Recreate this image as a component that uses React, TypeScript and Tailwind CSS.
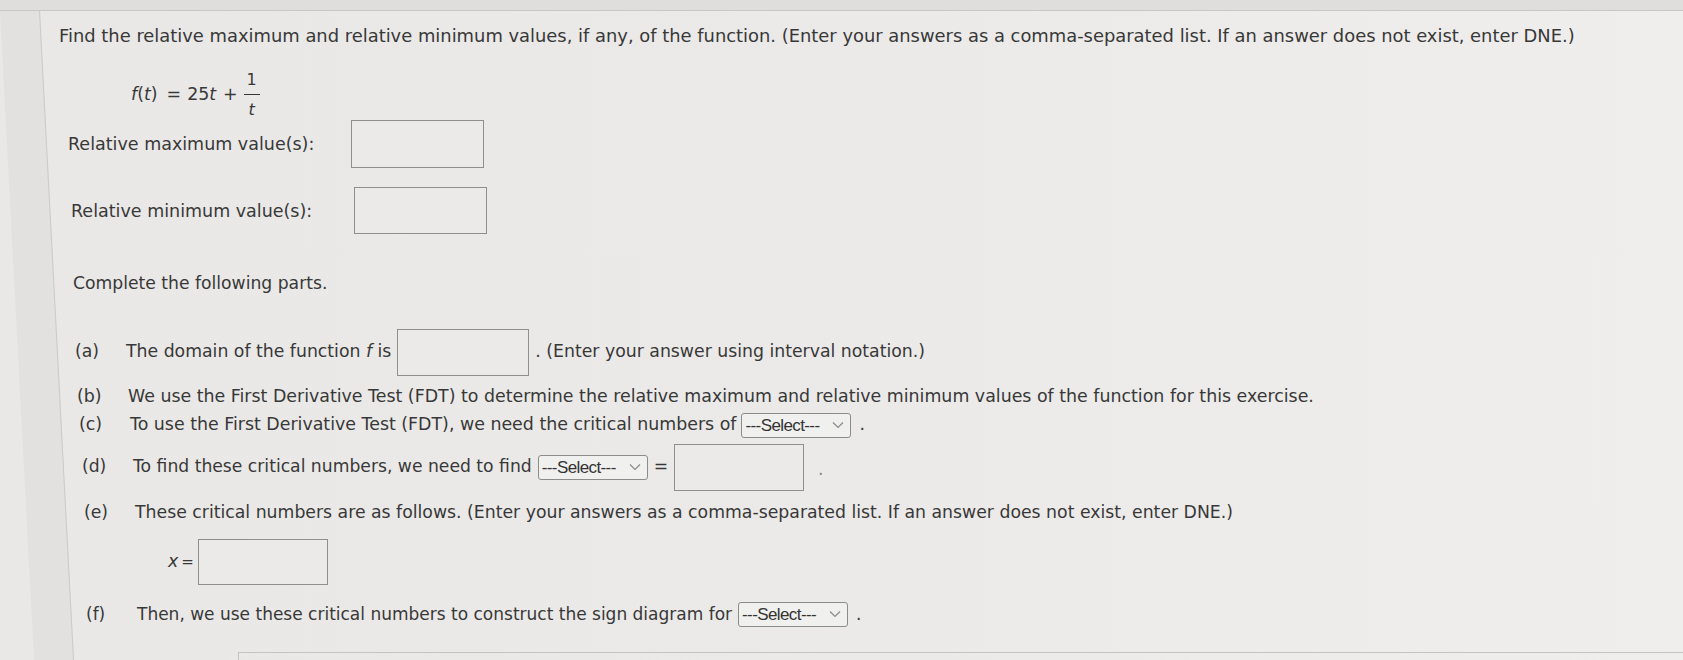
import React from 'react';

const box = 'border border-[#8f8f8d] bg-[#ebeae8] shrink-0';

const Select: React.FC = () => (
  <span className="w-[110px] h-[25px] shrink-0 inline-flex items-center justify-between border border-[#8c8c8a] rounded-[3px] bg-[#f0f0ee] pl-[3px] pr-[6px] font-['Liberation_Sans',sans-serif] text-[17px] text-[#333]">
    <span className="tracking-[-0.6px]">---Select---</span>
    <svg width="12" height="8" viewBox="0 0 12 8" className="shrink-0">
      <path d="M1 1.5 L6 6.5 L11 1.5" fill="none" stroke="#8a8a8a" strokeWidth="1.2" />
    </svg>
  </span>
);

const Part: React.FC<{ tag: string; pl: string; h?: string; mt: string; size?: string; children: React.ReactNode }> = ({
  tag,
  pl,
  h = 'h-[22px]',
  mt,
  size = 'text-[17.4px]',
  children,
}) => (
  <div className={`flex items-center ${h} ${mt} ${pl} ${size}`}>
    <span className="w-[51px] shrink-0">{tag}</span>
    <div className="flex items-center whitespace-nowrap">{children}</div>
  </div>
);

export default function App() {
  return (
    <div className="w-[1683px] h-[660px] overflow-hidden bg-[#e9e8e6] text-[#383838] font-['DejaVu_Sans',sans-serif] text-[17.4px] leading-none">
      {/* top strip */}
      <div className="h-[11px] bg-[#dfdedc] border-b border-[#c8c7c5]" />

      <div className="flex h-[649px]">
        {/* left margin */}
        <div className="w-[40px] shrink-0 bg-[#e2e1df] border-r border-[#cbcac8] origin-top skew-x-3" />

        <div className="flex-1 flex flex-col bg-gradient-to-r from-[#e9e8e6] via-[#ebeae8] to-[#efeeec]">
          <div className="h-[22px] mt-[14px] pl-[19px] flex items-center whitespace-nowrap text-[17.9px]">
            Find the relative maximum and relative minimum values, if any, of the function. (Enter your answers as a
            comma-separated list. If an answer does not exist, enter DNE.)
          </div>

          {/* f(t) */}
          <div className="h-[44px] mt-[26px] pl-[91px] flex items-center whitespace-nowrap">
            <span>
              <span className="italic">f</span>(<span className="italic">t</span>)
            </span>
            <span className="ml-[9px]">=</span>
            <span className="ml-[6px]">
              25<span className="italic">t</span>
            </span>
            <span className="ml-[7px]">+</span>
            <span className="inline-flex flex-col items-center ml-[6px] text-[16px]">
              <span className="pb-[6px]">1</span>
              <span className="w-[16px] h-px bg-[#383838]" />
              <span className="italic pt-[7px]">t</span>
            </span>
          </div>

          <div className="h-[48px] mt-[3px] pl-[28px] flex items-center text-[17.5px]">
            <span className="w-[283px] shrink-0 pt-[2px]">Relative maximum value(s):</span>
            <span className={`${box} w-[133px] h-[48px]`} />
          </div>

          <div className="h-[48px] mt-[18px] pl-[31px] flex items-center text-[17.5px]">
            <span className="w-[283px] shrink-0 pt-[3px]">Relative minimum value(s):</span>
            <span className={`${box} w-[133px] h-[47px]`} />
          </div>

          <div className="h-[22px] mt-[39px] pl-[33px] flex items-center text-[17.2px]">
            Complete the following parts.
          </div>

          <Part tag="(a)" pl="pl-[35px]" h="h-[48px]" mt="mt-[33px]" size="text-[17.3px]">
            <span>
              The domain of the function <span className="italic">f</span> is
            </span>
            <span className={`${box} w-[132px] h-[47px] ml-[6px]`} />
            <span className="ml-[6px]">. (Enter your answer using interval notation.)</span>
          </Part>

          <Part tag="(b)" pl="pl-[37px]" mt="mt-[10px]">
            We use the First Derivative Test (FDT) to determine the relative maximum and relative minimum values of the
            function for this exercise.
          </Part>

          <Part tag="(c)" pl="pl-[39px]" mt="mt-[6px]">
            <span>To use the First Derivative Test (FDT), we need the critical numbers of</span>
            <span className="ml-[5px] flex">
              <Select />
            </span>
            <span className="ml-[8px]">.</span>
          </Part>

          <Part tag="(d)" pl="pl-[42px]" h="h-[48px]" mt="mt-[7px]" size="text-[17.2px]">
            <span>To find these critical numbers, we need to find</span>
            <span className="ml-[6px] flex">
              <Select />
            </span>
            <span className="ml-[6px]">=</span>
            <span className={`${box} w-[130px] h-[47px] ml-[6px]`} />
            <span className="ml-[14px] pt-[6px] text-[#888]">.</span>
          </Part>

          <Part tag="(e)" pl="pl-[44px]" mt="mt-[11px]" size="text-[17.3px]">
            These critical numbers are as follows. (Enter your answers as a comma-separated list. If an answer does not
            exist, enter DNE.)
          </Part>

          <div className="h-[46px] mt-[15px] pl-[128px] flex items-center">
            <span className="italic">x</span>
            <span className="ml-[3px] text-[15px]">=</span>
            <span className={`${box} w-[130px] h-[46px] ml-[4px]`} />
          </div>

          <Part tag="(f)" pl="pl-[46px]" mt="mt-[18px]" size="text-[17px]">
            <span>Then, we use these critical numbers to construct the sign diagram for</span>
            <span className="ml-[6px] flex">
              <Select />
            </span>
            <span className="ml-[8px]">.</span>
          </Part>

          <div className="mt-[27px] ml-[198px] flex-1 border-t border-l border-[#c4c3c1]" />
        </div>
      </div>
    </div>
  );
}
